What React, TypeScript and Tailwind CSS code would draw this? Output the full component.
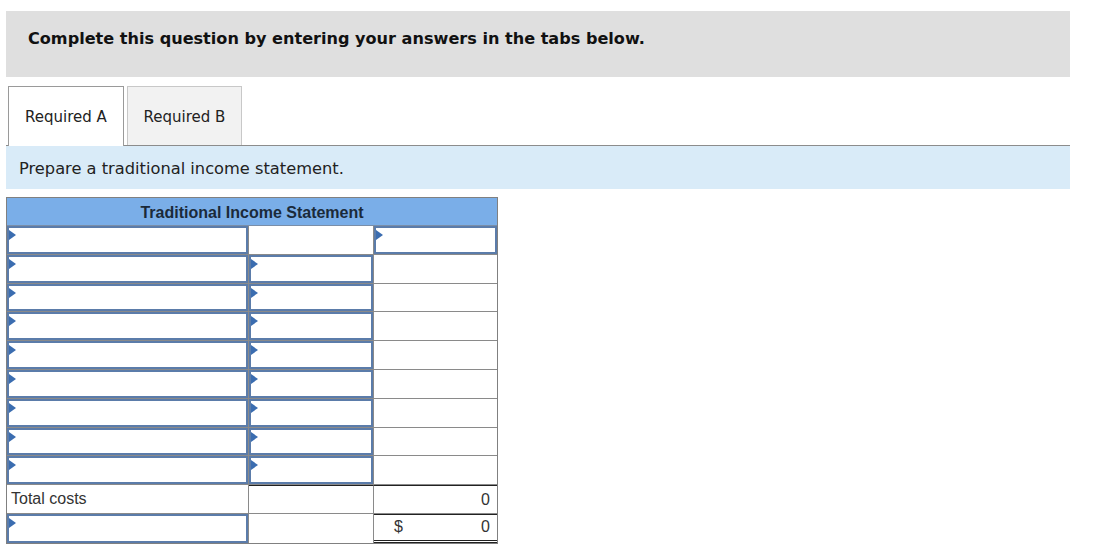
import React from "react";

const Tri = () => (
  <span className="absolute left-0 top-[2px] w-0 h-0 border-t-[5px] border-b-[5px] border-l-[7px] border-t-transparent border-b-transparent border-l-[#3b6db0]" />
);

const Input = () => (
  <div className="relative h-full w-full border-2 border-[#5b7caa] bg-white">
    <Tri />
  </div>
);

type Cell = "in" | "plain" | { text: string; align?: "left" | "right"; dollar?: boolean };

const rows: { c: Cell[]; special?: "total" | "final" }[] = [
  { c: ["in", "plain", "in"] },
  ...Array.from({ length: 8 }, () => ({ c: ["in", "in", "plain"] as Cell[] })),
  { c: [{ text: "Total costs" }, "plain", { text: "0", align: "right" }], special: "total" },
  { c: ["in", "plain", { text: "0", align: "right", dollar: true }], special: "final" },
];

export default function App() {
  return (
    <div className="w-[1093px] h-[553px] bg-white relative overflow-hidden">
      <div className="pt-[11px] pl-[6px] w-[1070px]">
        <div className="h-[66px] bg-[#dfdfdf] flex items-center pl-[22px] pb-[10px]">
          <span className="text-[16.1px] font-bold text-[#111]" style={{ fontFamily: '"DejaVu Sans", Verdana, sans-serif' }}>
            Complete this question by entering your answers in the tabs below.
          </span>
        </div>
        <div className="mt-[9px] flex items-end h-[60px] border-b border-[#8c8c8c]" style={{ fontFamily: '"DejaVu Sans", Verdana, sans-serif' }}>
          <div className="ml-[2px] w-[116px] h-[60px] -mb-px pt-[2px] bg-white border border-b-0 border-[#9a9a9a] flex items-center justify-center text-[15px] text-[#222]">
            Required A
          </div>
          <div className="ml-[3px] w-[115px] h-[59px] pt-[2px] bg-[#f2f2f2] border border-b-0 border-[#c8c8c8] flex items-center justify-center text-[15px] text-[#222]">
            Required B
          </div>
        </div>
        <div className="h-[43px] bg-[#d9ebf8] flex items-center pl-[13px] pt-[3px]" style={{ fontFamily: '"DejaVu Sans", Verdana, sans-serif' }}>
          <span className="text-[16.25px] text-[#222]">Prepare a traditional income statement.</span>
        </div>
        <div className="mt-[8px] w-[492px] border border-[#808080]" style={{ fontFamily: '"Liberation Sans", Arial, sans-serif' }}>
          <div className="h-[28px] bg-[#7aaee8] flex items-center justify-center pt-[2px] text-[16px] font-bold text-[#1a2a3a] border-b border-[#7a8ea8]">
            Traditional Income Statement
          </div>
          {rows.map((r, i) => (
            <div key={i} className="grid grid-cols-[242px_125px_1fr] h-[28.8px]">
              {r.c.map((c, j) => {
                const last = j === 2;
                let topBorder = "";
                if (r.special === "total" && j > 0) topBorder = "border-t border-t-[#222]";
                if (r.special === "final" && j === 2) topBorder = "border-t border-t-[#222]";
                const bottom =
                  r.special === "final" && j === 2
                    ? "border-b-[3px] border-double border-b-[#222]"
                    : i === rows.length - 1
                    ? ""
                    : "border-b border-[#8a8a8a]";
                return (
                  <div
                    key={j}
                    className={`${last ? "" : "border-r border-r-[#8a8a8a]"} ${bottom} ${topBorder} relative`}
                  >
                    {c === "in" ? (
                      <Input />
                    ) : c === "plain" ? null : (
                      <div className="h-full flex items-center px-[4px] text-[16px] text-[#333]">
                        {c.dollar && <span className="ml-[16px]">$</span>}
                        <span className={c.align === "right" ? "ml-auto pr-[3px]" : ""}>{c.text}</span>
                      </div>
                    )}
                  </div>
                );
              })}
            </div>
          ))}
        </div>
      </div>
    </div>
  );
}
